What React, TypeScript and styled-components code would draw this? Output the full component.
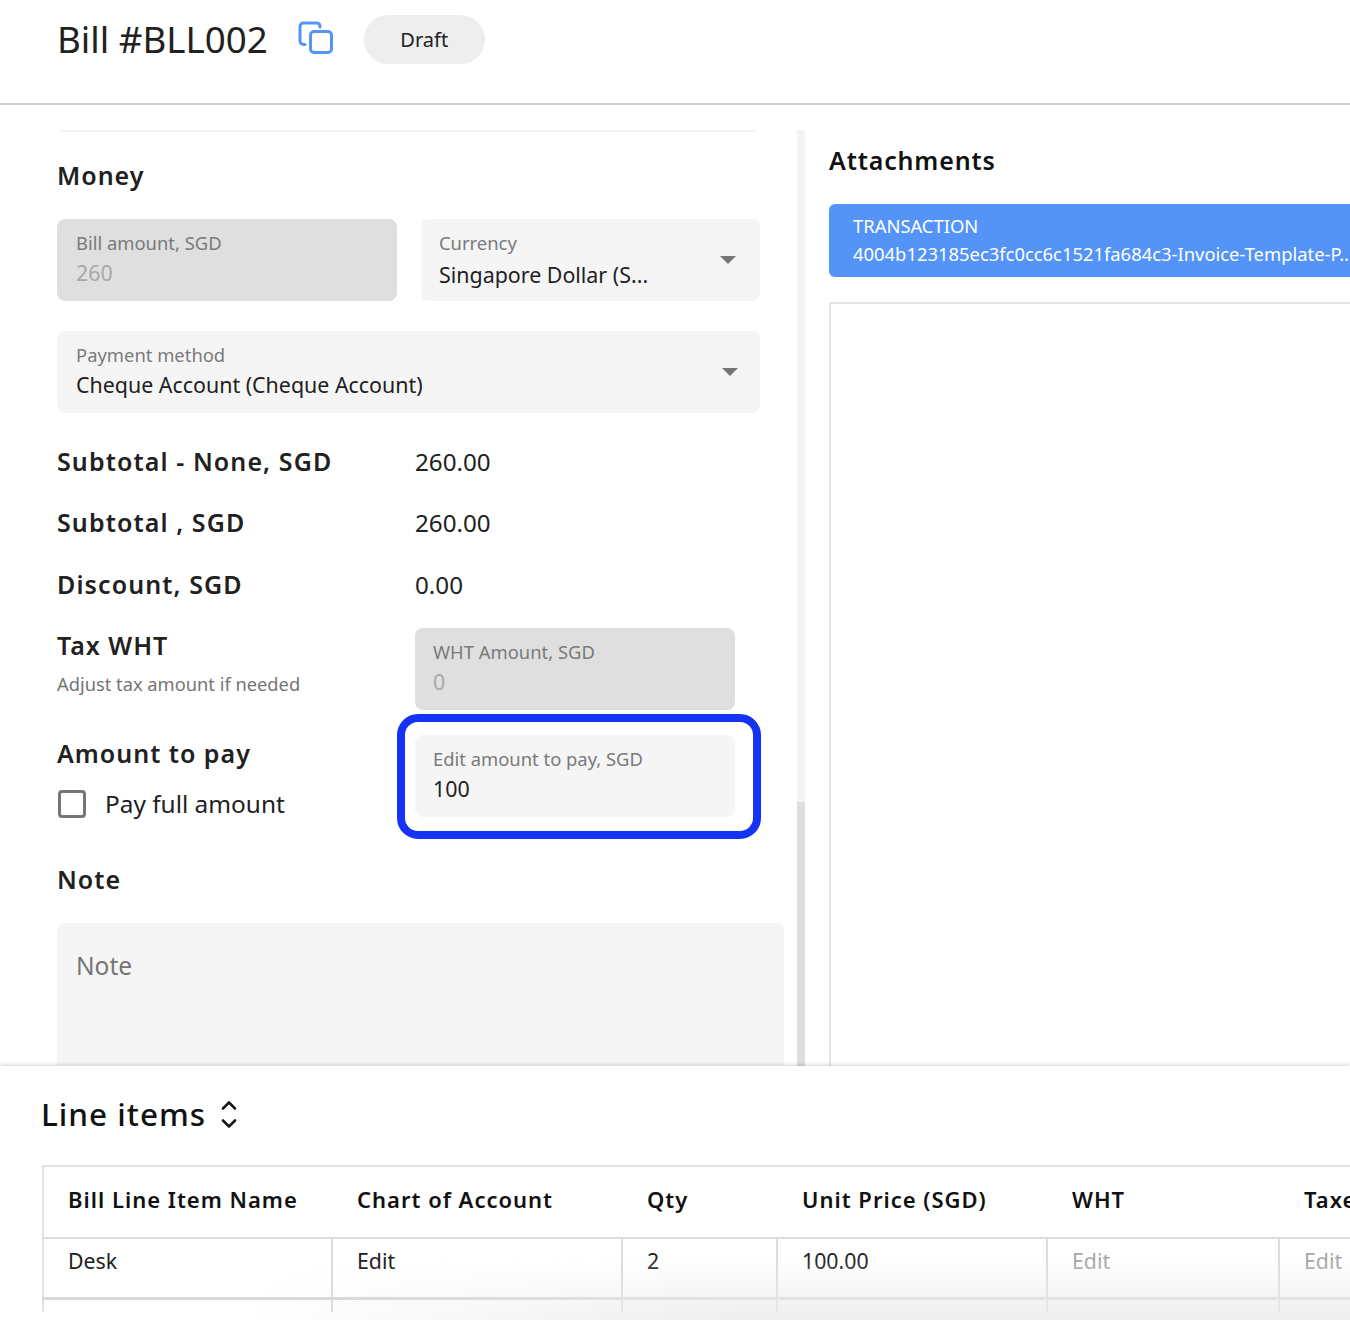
import React from "react";
import styled, { createGlobalStyle } from "styled-components";

const GlobalStyle = createGlobalStyle`
    html, body {
        margin: 0;
        padding: 0;
        background: #fff;
    }
    body {
        font-family: "Noto Sans", "Open Sans", sans-serif;
        color: #212121;
    }
`;

const Page = styled.div`
    width: 1350px;
    height: 1320px;
    overflow: hidden;
    position: relative;
    display: flex;
    flex-direction: column;
`;

const Header = styled.header`
    height: 105px;
    flex: none;
    box-sizing: border-box;
    border-bottom: 2px solid #cfcfcf;
    padding: 15px 0 0 57px;
    display: flex;
    align-items: flex-start;
`;

const BillTitle = styled.h1`
    margin: 0;
    font-weight: 400;
    font-size: 36.7px;
    line-height: 49px;
    color: #212121;
`;

const CopyButton = styled.div`
    width: 36px;
    height: 36px;
    margin: 5px 30px 0 30px;
`;

const StatusPill = styled.div`
    width: 121px;
    height: 49px;
    border-radius: 25px;
    background: #eeeeee;
    display: flex;
    align-items: center;
    justify-content: center;
    font-size: 20px;
`;

const Main = styled.main`
    height: 961px;
    flex: none;
    display: flex;
    overflow: hidden;
`;

const LeftColumn = styled.section`
    width: 727px;
    flex: none;
    margin: 25px 0 0 57px;
`;

const TopRule = styled.div`
    width: 696px;
    height: 2px;
    margin-left: 3px;
    background: #f3f3f3;
`;

const SectionTitle = styled.h2<{ $top: number }>`
    margin: ${(p) => p.$top}px 0 0;
    font-size: 25px;
    line-height: 34px;
    font-weight: 600;
    letter-spacing: 1px;
    color: #212121;
`;

const FieldRow = styled.div`
    display: flex;
    gap: 24px;
    width: 703px;
    margin-top: 27px;
`;

const Field = styled.div<{ $width?: number; $disabled?: boolean; $inset?: number }>`
    position: relative;
    box-sizing: border-box;
    height: 82px;
    flex: ${(p) => (p.$width ? "none" : "1")};
    width: ${(p) => (p.$width ? `${p.$width}px` : "auto")};
    padding: 11px 18px 0 ${(p) => p.$inset ?? 18}px;
    border-radius: 8px;
    background: ${(p) => (p.$disabled ? "#dfdfdf" : "#f5f5f5")};
`;

const FieldLabel = styled.div`
    font-size: 18.4px;
    line-height: 25px;
    color: #7a7a7a;
`;

const FieldValue = styled.div<{ $muted?: boolean }>`
    margin-top: 2px;
    font-size: 21.4px;
    line-height: 32px;
    white-space: nowrap;
    color: ${(p) => (p.$muted ? "#a8a8a8" : "#212121")};
`;

const CurrencyValue = styled(FieldValue)`
    margin-top: 4px;
`;

const Caret = styled.span<{ $right: number }>`
    position: absolute;
    right: ${(p) => p.$right}px;
    top: 37px;
    width: 0;
    height: 0;
    border-left: 8px solid transparent;
    border-right: 8px solid transparent;
    border-top: 8px solid #757575;
`;

const PaymentField = styled(Field)`
    width: 703px;
    margin-top: 30px;
`;

const SummaryRow = styled.div<{ $top: number }>`
    display: flex;
    align-items: center;
    height: 34px;
    margin-top: ${(p) => p.$top}px;
`;

const SummaryLabel = styled.div`
    width: 358px;
    flex: none;
    font-size: 25px;
    font-weight: 600;
    letter-spacing: 1.1px;
`;

const SummaryValue = styled.div`
    font-size: 24.2px;
`;

const SplitRow = styled.div<{ $top: number }>`
    display: flex;
    align-items: flex-start;
    margin-top: ${(p) => p.$top}px;
`;

const SplitLeft = styled.div`
    width: 358px;
    flex: none;
`;

const SplitTitle = styled.div<{ $top: number }>`
    margin-top: ${(p) => p.$top}px;
    font-size: 25px;
    line-height: 34px;
    font-weight: 600;
    letter-spacing: 1px;
`;

const Hint = styled.div`
    margin-top: 9px;
    font-size: 18.3px;
    line-height: 26px;
    color: #757575;
`;

const CheckRow = styled.div`
    margin-top: 17px;
    display: flex;
    align-items: center;
    gap: 19px;
    margin-left: 1px;
`;

const Checkbox = styled.span`
    width: 28px;
    height: 28px;
    box-sizing: border-box;
    border: 3px solid #757575;
    border-radius: 4px;
`;

const CheckText = styled.span`
    font-size: 24.4px;
    line-height: 34px;
`;

const Highlighted = styled.div`
    position: relative;
    &::after {
        content: "";
        position: absolute;
        left: -18px;
        top: -21px;
        right: -26px;
        bottom: -22px;
        border: 8px solid #1433f5;
        border-radius: 21px;
        pointer-events: none;
    }
`;

const NoteBox = styled.div`
    box-sizing: border-box;
    width: 727px;
    height: 160px;
    margin-top: 27px;
    padding: 25px 19px;
    border-radius: 8px 8px 0 0;
    background: #f5f5f5;
    font-size: 24.5px;
    line-height: 36px;
    color: #757575;
`;

const ScrollTrack = styled.div`
    width: 8px;
    flex: none;
    margin: 25px 0 0 13px;
    background: #f4f4f4;
`;

const ScrollThumb = styled.div`
    height: 300px;
    margin-top: 672px;
    background: #dedede;
`;

const RightColumn = styled.section`
    flex: 1;
    min-width: 0;
    margin-left: 24px;
    padding-top: 38px;
`;

const AttachmentTitle = styled.h2`
    margin: 0;
    font-size: 25px;
    line-height: 34px;
    font-weight: 600;
    letter-spacing: 0.85px;
    color: #111;
`;

const AttachmentBar = styled.div`
    height: 73px;
    margin-top: 27px;
    box-sizing: border-box;
    padding: 8px 0 0 24px;
    background: #5594f7;
    border-radius: 6px 0 0 6px;
    color: #fff;
    font-size: 18.4px;
    line-height: 28px;
    white-space: nowrap;
    overflow: hidden;
`;

const Preview = styled.div`
    height: 780px;
    margin-top: 25px;
    border-top: 2px solid #e4e4e4;
    border-left: 2px solid #e4e4e4;
`;

const LinePanel = styled.section`
    flex: 1;
    position: relative;
    background: #fff;
    box-shadow: 0 -1px 4px rgba(0, 0, 0, 0.18);
    padding: 28px 0 0 41px;
    overflow: hidden;

    &::after {
        content: "";
        position: absolute;
        left: 240px;
        right: 0;
        bottom: 0;
        height: 62px;
        background: linear-gradient(to bottom, rgba(235, 235, 235, 0), rgba(235, 235, 235, 0.85));
        -webkit-mask-image: linear-gradient(to right, transparent, #000 45%);
        mask-image: linear-gradient(to right, transparent, #000 45%);
    }
`;

const PanelTitle = styled.div`
    display: flex;
    align-items: center;
    gap: 15px;
    height: 38px;
    font-size: 31.5px;
    font-weight: 500;
    letter-spacing: 1px;
    color: #111;

    svg {
        margin-top: 4px;
    }
`;

const TableClip = styled.div`
    margin-top: 33px;
    margin-left: 1px;
    height: 147px;
    overflow: hidden;
`;

const Table = styled.table`
    width: 1400px;
    table-layout: fixed;
    border-collapse: collapse;
    border-top: 2px solid #e2e2e2;
    border-left: 2px solid #e2e2e2;
`;

const HeadCell = styled.th`
    height: 72px;
    padding: 0 0 6px 25px;
    box-sizing: border-box;
    text-align: left;
    font-size: 22px;
    font-weight: 600;
    letter-spacing: 1px;
    color: #111;
    white-space: nowrap;
    border-bottom: 2px solid #dcdcdc;

    &:first-child {
        padding-left: 24px;
    }
`;

const BodyCell = styled.td<{ $muted?: boolean }>`
    height: 60px;
    box-sizing: border-box;
    padding: 0 0 14px 24px;
    font-size: 21.3px;
    color: ${(p) => (p.$muted ? "#a6a6a6" : "#212121")};
    border-right: 2px solid #dcdcdc;
    border-bottom: 3px solid #d8d8d8;
`;

const CopyIcon = () => (
    <svg width="36" height="36" viewBox="0 0 36 36" fill="none" stroke="#5594f7" strokeWidth="3" strokeLinecap="round" strokeLinejoin="round">
        <rect x="12.5" y="11.5" width="21" height="21" rx="3.5" />
        <path d="M7 24.5H5.5A3.5 3.5 0 0 1 2 21V6.5A3.5 3.5 0 0 1 5.5 3H19A3.5 3.5 0 0 1 22 6V7" />
    </svg>
);

const SortIcon = () => (
    <svg width="16" height="30" viewBox="0 0 16 30" fill="none" stroke="#1a1a1a" strokeWidth="2.6" strokeLinecap="round" strokeLinejoin="round">
        <path d="M2 8.5L8 2.5L14 8.5" />
        <path d="M2 20.5L8 26.5L14 20.5" />
    </svg>
);

const columns = [289, 290, 155, 270, 232, 260];
const headers = ["Bill Line Item Name", "Chart of Account", "Qty", "Unit Price (SGD)", "WHT", "Taxes"];

export default function App() {
    return (
        <Page>
            <GlobalStyle />
            <Header>
                <BillTitle>Bill #BLL002</BillTitle>
                <CopyButton>
                    <CopyIcon />
                </CopyButton>
                <StatusPill>Draft</StatusPill>
            </Header>
            <Main>
                <LeftColumn>
                    <TopRule />
                    <SectionTitle $top={26}>Money</SectionTitle>
                    <FieldRow>
                        <Field $width={340} $disabled $inset={19}>
                            <FieldLabel>Bill amount, SGD</FieldLabel>
                            <FieldValue $muted>260</FieldValue>
                        </Field>
                        <Field>
                            <FieldLabel>Currency</FieldLabel>
                            <CurrencyValue>Singapore Dollar (S...</CurrencyValue>
                            <Caret $right={24} />
                        </Field>
                    </FieldRow>
                    <PaymentField $inset={19}>
                        <FieldLabel>Payment method</FieldLabel>
                        <FieldValue>Cheque Account (Cheque Account)</FieldValue>
                        <Caret $right={22} />
                    </PaymentField>
                    <SummaryRow $top={31}>
                        <SummaryLabel>Subtotal - None, SGD</SummaryLabel>
                        <SummaryValue>260.00</SummaryValue>
                    </SummaryRow>
                    <SummaryRow $top={27}>
                        <SummaryLabel>Subtotal , SGD</SummaryLabel>
                        <SummaryValue>260.00</SummaryValue>
                    </SummaryRow>
                    <SummaryRow $top={28}>
                        <SummaryLabel>Discount, SGD</SummaryLabel>
                        <SummaryValue>0.00</SummaryValue>
                    </SummaryRow>
                    <SplitRow $top={27}>
                        <SplitLeft>
                            <SplitTitle $top={0}>Tax WHT</SplitTitle>
                            <Hint>Adjust tax amount if needed</Hint>
                        </SplitLeft>
                        <Field $width={320} $disabled>
                            <FieldLabel>WHT Amount, SGD</FieldLabel>
                            <FieldValue $muted>0</FieldValue>
                        </Field>
                    </SplitRow>
                    <SplitRow $top={25}>
                        <SplitLeft>
                            <SplitTitle $top={1}>Amount to pay</SplitTitle>
                            <CheckRow>
                                <Checkbox />
                                <CheckText>Pay full amount</CheckText>
                            </CheckRow>
                        </SplitLeft>
                        <Highlighted>
                            <Field $width={320}>
                                <FieldLabel>Edit amount to pay, SGD</FieldLabel>
                                <FieldValue>100</FieldValue>
                            </Field>
                        </Highlighted>
                    </SplitRow>
                    <SectionTitle $top={41}>Note</SectionTitle>
                    <NoteBox>Note</NoteBox>
                </LeftColumn>
                <ScrollTrack>
                    <ScrollThumb />
                </ScrollTrack>
                <RightColumn>
                    <AttachmentTitle>Attachments</AttachmentTitle>
                    <AttachmentBar>
                        TRANSACTION
                        <br />
                        4004b123185ec3fc0cc6c1521fa684c3-Invoice-Template-P..
                    </AttachmentBar>
                    <Preview />
                </RightColumn>
            </Main>
            <LinePanel>
                <PanelTitle>
                    Line items
                    <SortIcon />
                </PanelTitle>
                <TableClip>
                    <Table>
                        <colgroup>
                            {columns.map((w, i) => (
                                <col key={i} width={w} />
                            ))}
                        </colgroup>
                        <thead>
                            <tr>
                                {headers.map((h) => (
                                    <HeadCell key={h}>{h}</HeadCell>
                                ))}
                            </tr>
                        </thead>
                        <tbody>
                            <tr>
                                <BodyCell>Desk</BodyCell>
                                <BodyCell>Edit</BodyCell>
                                <BodyCell>2</BodyCell>
                                <BodyCell>100.00</BodyCell>
                                <BodyCell $muted>Edit</BodyCell>
                                <BodyCell $muted>Edit</BodyCell>
                            </tr>
                            <tr>
                                <BodyCell />
                                <BodyCell />
                                <BodyCell />
                                <BodyCell />
                                <BodyCell />
                                <BodyCell />
                            </tr>
                        </tbody>
                    </Table>
                </TableClip>
            </LinePanel>
        </Page>
    );
}
